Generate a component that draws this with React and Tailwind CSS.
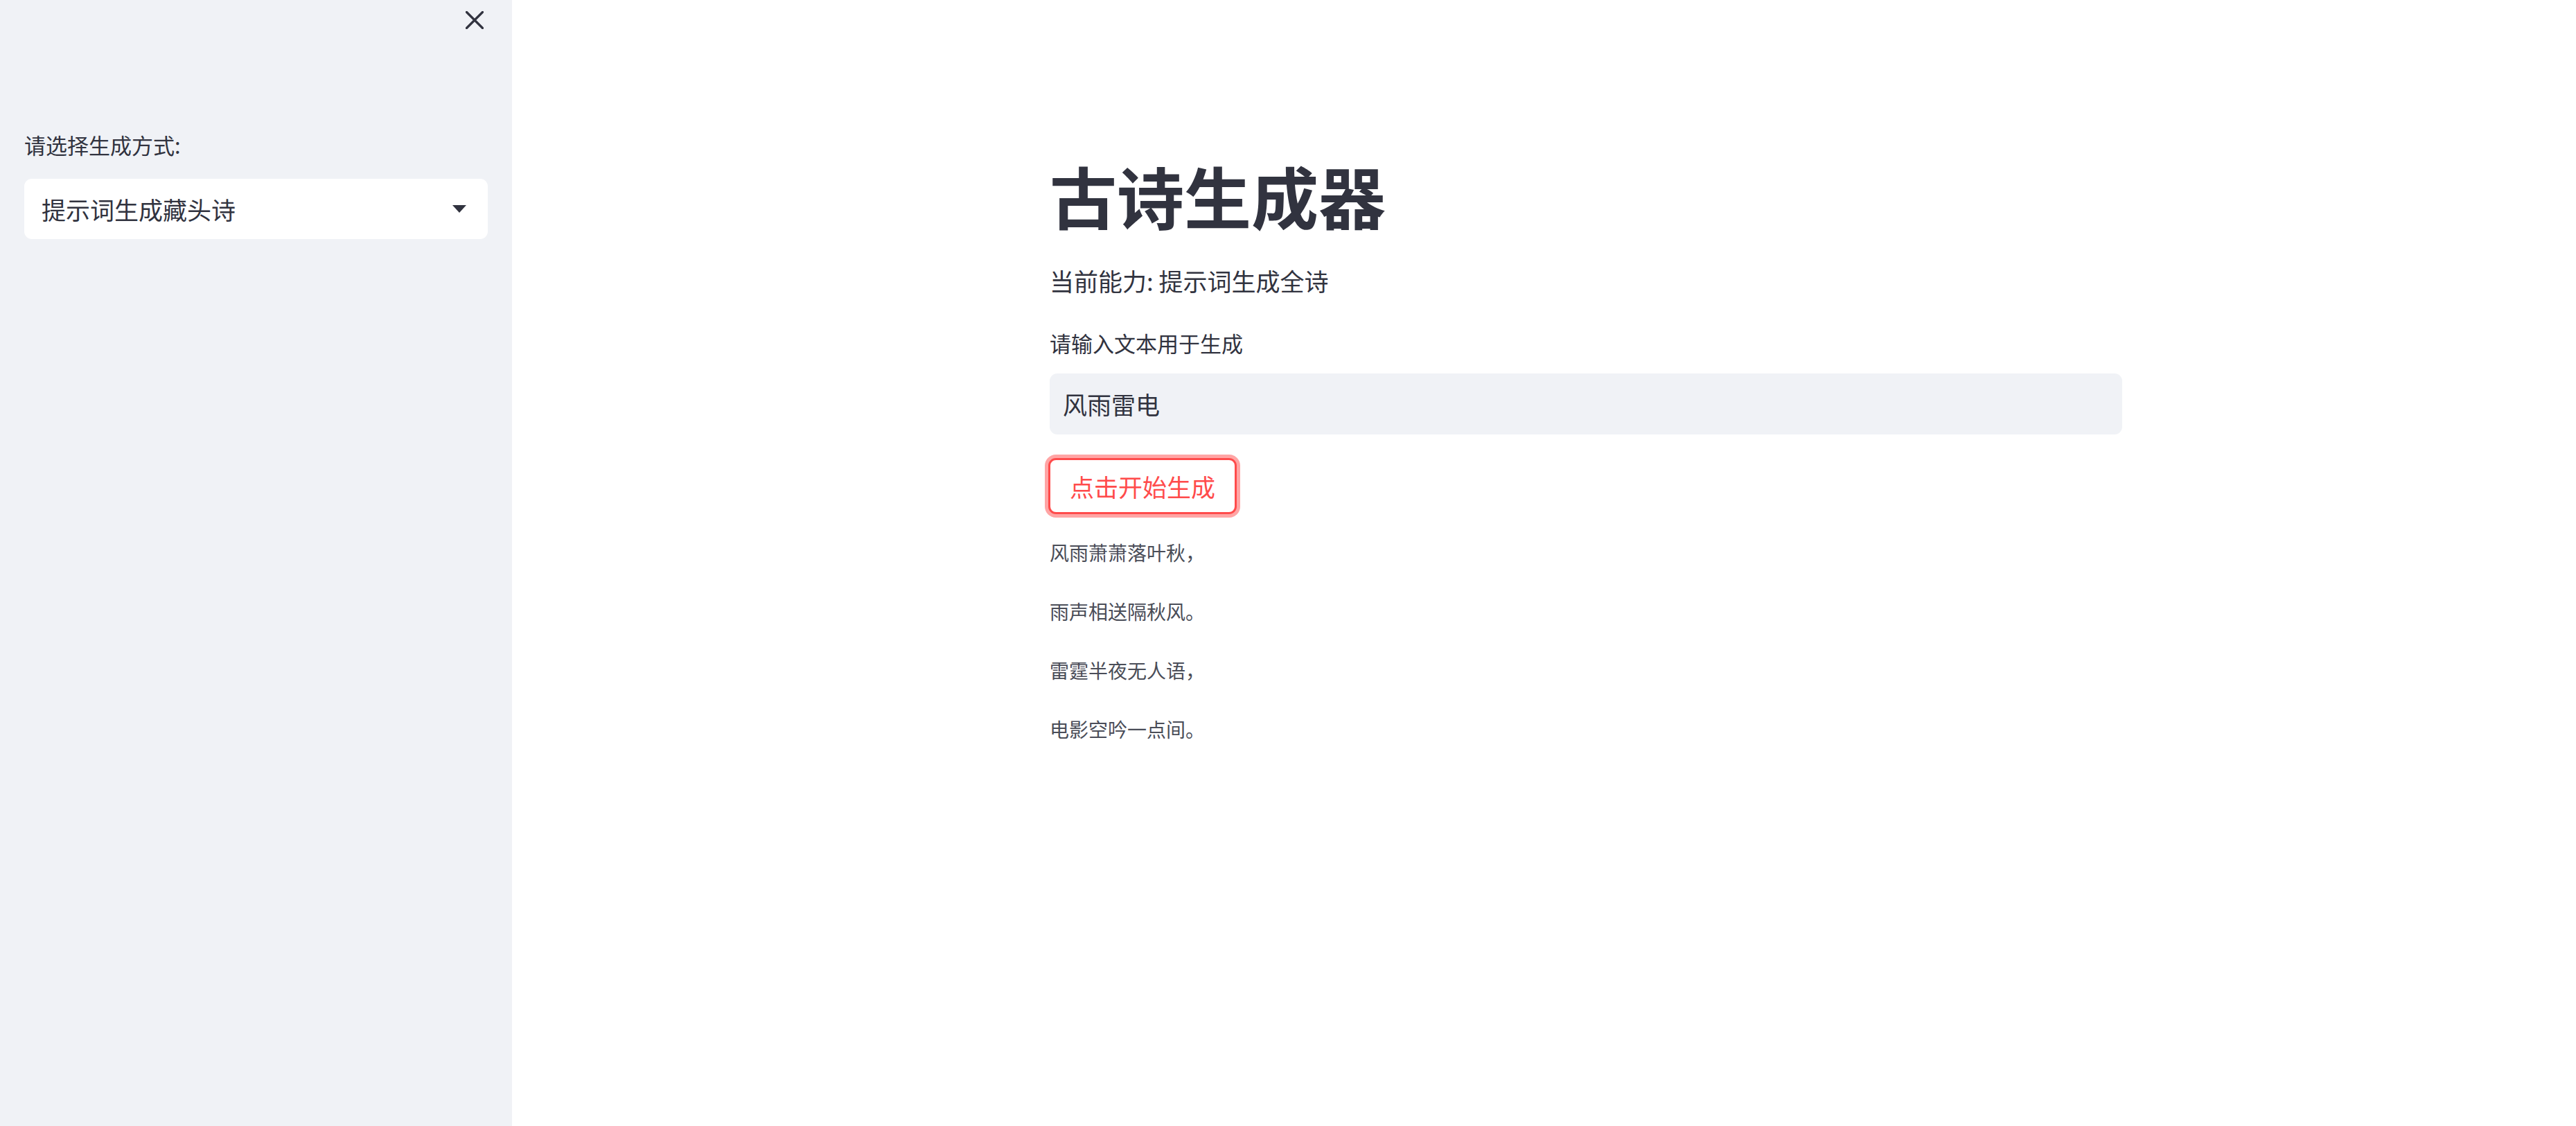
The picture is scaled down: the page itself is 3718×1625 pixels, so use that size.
import React from "react";

const sans = { fontFamily: '"Noto Sans CJK SC", "Noto Sans", sans-serif' };

function CloseIcon() {
    return (
        <svg width="26" height="26" viewBox="0 0 26 26" fill="none">
            <path d="M1.5 1.5 24.5 24.5M24.5 1.5 1.5 24.5" stroke="#31333f" strokeWidth="3.2" strokeLinecap="round" />
        </svg>
    );
}

function Sidebar() {
    return (
        <aside className="w-[739px] shrink-0 bg-[#f0f2f6] min-h-[1625px] px-[35px]">
            <div className="flex justify-end pt-[16px] pr-[6px]">
                <CloseIcon />
            </div>
            <p className="mt-[145px] text-[31px] leading-[44px] text-[#31333f]">
                请选择生成方式:
            </p>
            <div className="mt-[27px] h-[87px] bg-white rounded-[11px] flex items-center justify-between pl-[25px] pr-[31px]">
                <span className="text-[35px] leading-[50px] text-[#31333f]">提示词生成藏头诗</span>
                <svg width="20" height="11" viewBox="0 0 20 11">
                    <path d="M0 0h20L10 11z" fill="#31333f" />
                </svg>
            </div>
        </aside>
    );
}

export default function App() {
    const poem = ["风雨萧萧落叶秋，", "雨声相送隔秋风。", "雷霆半夜无人语，", "电影空吟一点间。"];

    return (
        <div className="w-[3718px] h-[1625px] flex bg-white overflow-hidden" style={sans}>
            <Sidebar />
            <main className="flex-1 pl-[776px] pt-[223px]">
                <div className="w-[1548px]">
                    <h1 className="text-[97px] leading-[116px] font-bold text-[#31333f]">古诗生成器</h1>
                    <p className="mt-[40px] text-[35px] leading-[52px] text-[#31333f]">
                        当前能力: 提示词生成全诗
                    </p>
                    <p className="mt-[42px] text-[31px] leading-[44px] text-[#31333f]">请输入文本用于生成</p>
                    <div className="mt-[22px] h-[88px] bg-[#f0f2f6] rounded-[11px] flex items-center pl-[19px]">
                        <span className="text-[35px] leading-[50px] text-[#31333f]">风雨雷电</span>
                    </div>
                    <button className="mt-[34px] -ml-[2px] w-[272px] h-[81px] bg-white border-[3px] border-[#ff4b4b] rounded-[11px] ring-[5px] ring-[#ff4b4b]/50 text-[35px] leading-[50px] text-[#ff4b4b] flex items-center justify-center">
                        点击开始生成
                    </button>
                    <div className="mt-[38px] flex flex-col gap-[45px]">
                        {poem.map((line) => (
                            <p
                                key={line}
                                className="text-[28px] leading-[40px] text-[#4a4d58]"
                                style={{ fontFamily: '"Liberation Serif", "Noto Sans CJK SC", serif' }}
                            >
                                {line}
                            </p>
                        ))}
                    </div>
                </div>
            </main>
        </div>
    );
}
